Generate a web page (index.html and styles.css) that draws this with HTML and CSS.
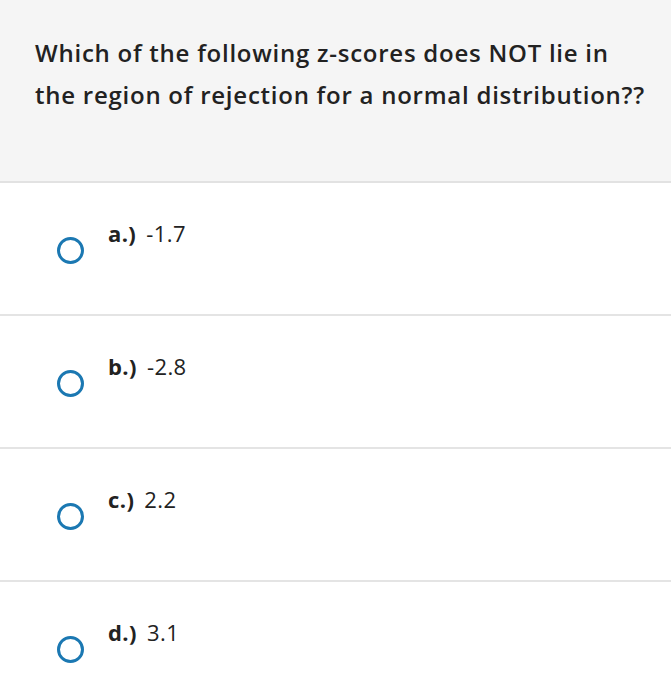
FILE: index.html
```html
<!DOCTYPE html>
<html>
<head>
<meta charset="utf-8">
<link rel="stylesheet" href="styles.css">
</head>
<body>
<div class="question">
  <p class="prompt">Which of the following z-scores does NOT lie in the region of rejection for a normal distribution??</p>
</div>
<ul class="options">
  <li class="option"><span class="radio"></span><span class="label"><b>a.)</b> -1.7</span></li>
  <li class="option"><span class="radio"></span><span class="label"><b>b.)</b> -2.8</span></li>
  <li class="option"><span class="radio"></span><span class="label"><b>c.)</b> 2.2</span></li>
  <li class="option"><span class="radio"></span><span class="label"><b>d.)</b> 3.1</span></li>
</ul>
</body>
</html>
```
FILE: styles.css
```css
html, body {
  margin: 0;
  padding: 0;
  background: #ffffff;
  font-family: "Open Sans", "Liberation Sans", sans-serif;
  color: #222222;
}
.question {
  background: #f5f5f5;
  height: 183px;
  border-bottom: 2px solid #e2e2e2;
  box-sizing: border-box;
  padding: 32px 20px 0 35px;
}
.prompt {
  margin: 0;
  font-size: 24px;
  line-height: 42px;
  font-weight: 600;
  letter-spacing: 0.75px;
}
.options {
  list-style: none;
  margin: 0;
  padding: 0;
}
.option {
  display: flex;
  align-items: flex-start;
  height: 133px;
  box-sizing: border-box;
  border-bottom: 2px solid #e4e4e4;
  padding: 36px 0 0 57px;
}
.radio {
  width: 21px;
  height: 21px;
  border: 3px solid #1b78b2;
  border-radius: 50%;
  margin-top: 18px;
  flex: none;
}
.label {
  margin-left: 24px;
  font-size: 22px;
  line-height: 28px;
  letter-spacing: 0.4px;
}
.label b {
  font-weight: 700;
  margin-right: 4px;
}
```
